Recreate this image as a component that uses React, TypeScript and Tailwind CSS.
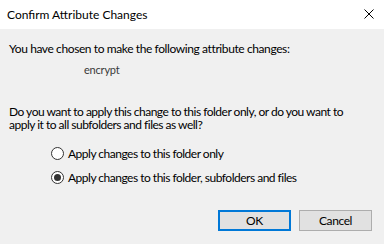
import React from "react";

function Radio({ checked, label }: { checked?: boolean; label: string }) {
  return (
    <div className="flex items-center h-[13px]">
      <span className="w-[13px] h-[13px] rounded-full border border-[#333333] bg-white flex items-center justify-center shrink-0">
        {checked && <span className="w-[7px] h-[7px] rounded-full bg-[#333333]" />}
      </span>
      <span className="ml-[4px] leading-[13px] whitespace-nowrap tracking-[-0.5px]">{label}</span>
    </div>
  );
}

export default function App() {
  return (
    <div
      className="w-[384px] h-[244px] flex flex-col text-[12px] text-black overflow-hidden tracking-[-0.4px]"
      style={{ fontFamily: 'Lato, "Noto Sans", sans-serif' }}
    >
      <div className="h-[29px] bg-white flex items-center justify-between pl-[7px] pr-[10px] shrink-0">
        <span className="leading-[16px] mt-[1px] whitespace-nowrap tracking-normal">Confirm Attribute Changes</span>
        <svg width="10" height="10" viewBox="0 0 10 10" className="mb-[2px]">
          <path d="M0.5 0.5 L9.5 9.5 M9.5 0.5 L0.5 9.5" stroke="#000" strokeWidth="1" fill="none" />
        </svg>
      </div>
      <div className="flex-1 bg-[#f0f0f0] flex flex-col pl-[9px]">
        <div className="mt-[12px] leading-[16px] whitespace-nowrap">You have chosen to make the following attribute changes:</div>
        <div className="mt-[6px] ml-[75px] leading-[14px] text-[11px] text-[#3a3a3a] tracking-[-0.2px]">encrypt</div>
        <div className="mt-[28px] leading-[13px] whitespace-nowrap tracking-[-0.5px]">
          Do you want to apply this change to this folder only, or do you want to
          <br />
          apply it to all subfolders and files as well?
        </div>
        <div className="mt-[16px] ml-[42px] flex flex-col gap-[11px]">
          <Radio label="Apply changes to this folder only" />
          <Radio checked label="Apply changes to this folder, subfolders and files" />
        </div>
        <div className="mt-[26px] flex justify-end gap-[8px] pr-[12px]">
          <button className="w-[73px] h-[21px] bg-[#e1e1e1] border-2 border-[#0078d7] flex items-center justify-center leading-[13px]">
            OK
          </button>
          <button className="w-[73px] h-[21px] bg-[#e1e1e1] border border-[#adadad] flex items-center justify-center leading-[13px]">
            Cancel
          </button>
        </div>
      </div>
    </div>
  );
}
